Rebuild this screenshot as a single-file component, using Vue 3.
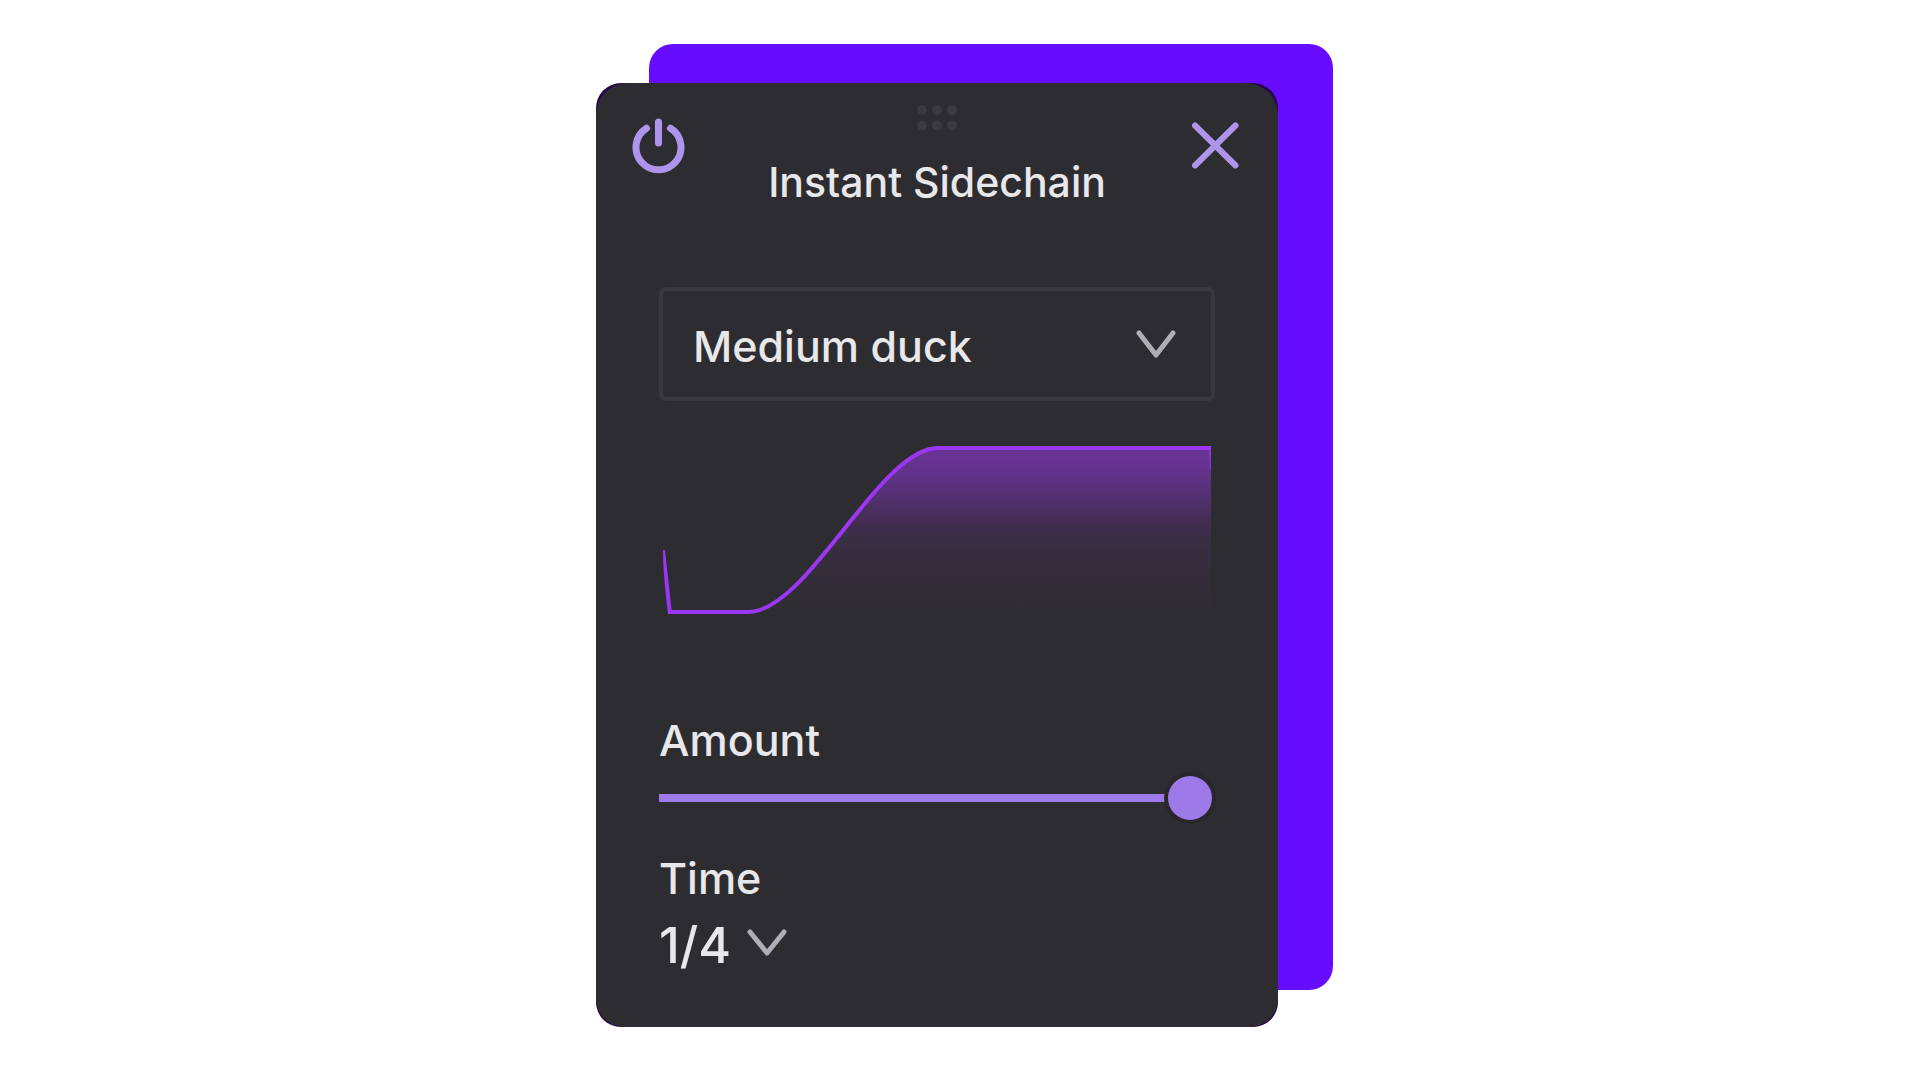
<script setup>
import { ref } from 'vue'

const enabled = ref(true)
const preset = ref('Medium duck')
const amount = ref(100)
const time = ref('1/4')
const dots = [5, 20, 35]
</script>

<template>
  <main class="stage">
    <section class="card" aria-labelledby="title">
      <div class="panel">
        <header class="header">
          <button class="icon-button" type="button" aria-label="Power" :aria-pressed="enabled" @click="enabled = !enabled">
            <svg width="54" height="58" viewBox="0 0 54 58" fill="none" stroke="currentColor" stroke-width="7" stroke-linecap="round">
              <path d="M26.500 5V26" />
              <path d="M14.500 11.300A22.500 22.500 0 1 0 38.500 11.300" />
            </svg>
          </button>
          <div class="heading">
            <svg class="grip" width="40" height="26" viewBox="0 0 40 26" aria-hidden="true">
              <template v-for="x in dots" :key="x">
                <circle :cx="x" cy="5" r="5" />
                <circle :cx="x" cy="20.5" r="5" />
              </template>
            </svg>
            <h1 id="title" class="title">Instant Sidechain</h1>
          </div>
          <button class="icon-button" type="button" aria-label="Close">
            <svg width="54" height="58" viewBox="0 0 54 58" fill="none" stroke="currentColor" stroke-width="6" stroke-linecap="round">
              <path d="M7 8.500L47.500 48.500M47.500 8.500L7 48.500" />
            </svg>
          </button>
        </header>

        <div class="body">
          <div class="preset">
            <select v-model="preset" class="preset-select" aria-label="Preset">
              <option>Medium duck</option>
            </select>
            <svg class="chevron" width="40" height="28" viewBox="0 0 40 28" aria-hidden="true">
              <path d="M3 3L20 25L37 3" />
            </svg>
          </div>

          <svg class="graph" viewBox="0 0 556 168" role="img" aria-label="Ducking curve">
            <defs>
              <linearGradient id="fade" x1="0" y1="2" x2="0" y2="168" gradientUnits="userSpaceOnUse">
                <stop offset="0" stop-color="#6a3496" />
                <stop offset="0.12" stop-color="#65328f" />
                <stop offset="0.3" stop-color="#52306f" />
                <stop offset="0.44" stop-color="#432d52" />
                <stop offset="0.54" stop-color="#3a2e44" />
                <stop offset="0.75" stop-color="#342d3a" />
                <stop offset="1" stop-color="#2e2d31" />
              </linearGradient>
            </defs>
            <path fill="url(#fade)" d="M89 166C149 166 220 2 279 2H552V168H89Z" />
            <path fill="none" stroke="#9b37f2" stroke-width="4" d="M11 166H89C149 166 220 2 279 2H552" />
            <path fill="#9b37f2" d="M4 104H6L13 168H9Q4 128 4 104Z" />
            <path fill="#9b37f2" fill-opacity="0.7" d="M550 2H552V24H551Z" />
          </svg>

          <label class="label amount-label" for="amount">Amount</label>
          <input id="amount" v-model="amount" class="slider" type="range" min="0" max="100" />

          <label class="label time-label" for="time">Time</label>
          <div class="time">
            <select id="time" v-model="time" class="time-select">
              <option>1/4</option>
            </select>
            <svg class="chevron" width="40" height="28" viewBox="0 0 40 28" aria-hidden="true">
              <path d="M3 3L20 24L37 3" />
            </svg>
          </div>
        </div>
      </div>
    </section>
  </main>
</template>

<style>
body {
  margin: 0;
  background: #fff;
}
</style>

<style scoped>
.stage {
  box-sizing: border-box;
  display: flex;
  justify-content: center;
  padding: 83px 46px 53px 0;
  font-family: Inter, "Liberation Sans", sans-serif;
  font-weight: 500;
  color: #e8e7e9;
}

.card {
  position: relative;
  z-index: 0;
  width: 100%;
  max-width: 682px;
  border-radius: 25px;
}

.card::before {
  content: "";
  position: absolute;
  z-index: -2;
  inset: -39px -55px 37px 53px;
  border-radius: 24px;
  background: #670dff;
}

.card::after {
  content: "";
  position: absolute;
  z-index: -1;
  inset: 0;
  border-radius: 25px;
  background: #27064a;
}

.panel {
  padding-bottom: 52px;
  border-radius: 32px 32px 28px 28px;
  background: #2d2c30;
}

.header {
  display: flex;
  justify-content: space-between;
  align-items: flex-start;
  padding: 22px 36px 0;
}

.heading {
  display: flex;
  flex-direction: column;
  align-items: center;
  gap: 27px;
}

.grip {
  fill: #3c3a40;
}

.title {
  margin: 0;
  font-size: 41px;
  font-weight: 500;
  line-height: 48px;
  white-space: nowrap;
}

.icon-button {
  display: flex;
  margin: 12px 0 0;
  padding: 0;
  border: 0;
  background: none;
  color: #af94ec;
}

.body {
  display: flex;
  flex-direction: column;
  padding: 81px 63px 0;
}

.preset {
  display: grid;
  align-items: center;
}

.preset > * {
  grid-area: 1 / 1;
}

.preset .chevron {
  justify-self: end;
  margin-right: 39px;
}

.preset-select,
.time-select {
  appearance: none;
  box-sizing: border-box;
  margin: 0;
  background: none;
  color: inherit;
  font-family: inherit;
  font-weight: inherit;
}

.preset-select {
  width: 100%;
  height: 114px;
  padding: 4px 80px 0 30px;
  border: 4px solid #3a383e;
  border-radius: 7px;
  font-size: 43px;
}

.chevron {
  fill: none;
  stroke: #b0adb7;
  stroke-width: 5;
  stroke-linecap: round;
  stroke-linejoin: round;
  pointer-events: none;
}

.graph {
  display: block;
  width: 100%;
  margin-top: 45px;
}

.label {
  font-size: 43px;
  line-height: 48px;
}

.amount-label {
  margin-top: 102px;
}

.slider {
  appearance: none;
  height: 52px;
  margin: 8px 3px 0 0;
  background: none;
}

.slider::-webkit-slider-runnable-track {
  height: 8px;
  background: #9d7ae8;
}

.slider::-webkit-slider-thumb {
  appearance: none;
  width: 44px;
  height: 44px;
  margin-top: -18px;
  border-radius: 50%;
  background: #9d7ae8;
  box-shadow: 0 0 0 4px #29272c;
}

.time-label {
  margin-top: 30px;
}

.time {
  display: flex;
  align-items: center;
  gap: 15px;
  margin-top: 13px;
}

.time .chevron {
  margin-bottom: 4px;
}

.time-select {
  height: 60px;
  padding: 0;
  border: 0;
  font-size: 50px;
}
</style>
